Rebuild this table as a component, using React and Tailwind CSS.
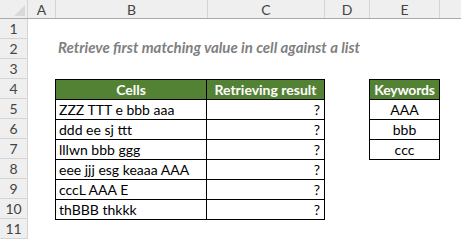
import React from 'react';

const rows = [
  ['ZZZ TTT e bbb aaa', 'AAA'],
  ['ddd ee sj ttt', 'bbb'],
  ['lllwn bbb ggg', 'ccc'],
  ['eee jjj esg keaaa AAA', null],
  ['cccL AAA E', null],
  ['thBBB thkkk', null],
];

const font = { fontFamily: 'Lato, "Open Sans", sans-serif' };

const App = () => {
  return (
    <div className="w-[461px] h-[240px] overflow-hidden bg-white text-[14px] text-black" style={font}>
      {/* column headers */}
      <div className="flex h-[19px] bg-[#efefef] border-b border-[#ababab] text-[14px] text-[#444]">
        <div className="w-[28px] border-r border-[#d4d4d4] flex items-end justify-end">
          <svg width="11" height="11" className="mr-[2px] mb-[2px]">
            <polygon points="11,0 11,11 0,11" fill="#d9d9d9" />
          </svg>
        </div>
        <div className="w-[28px] border-r border-[#d4d4d4] flex items-center justify-center">A</div>
        <div className="w-[152px] border-r border-[#d4d4d4] flex items-center justify-center">B</div>
        <div className="w-[117px] border-r border-[#d4d4d4] flex items-center justify-center">C</div>
        <div className="w-[45px] border-r border-[#d4d4d4] flex items-center justify-center">D</div>
        <div className="w-[70px] border-r border-[#d4d4d4] flex items-center justify-center">E</div>
        <div className="flex-1" />
      </div>

      <div className="flex">
        {/* row numbers */}
        <div className="w-[28px] bg-[#efefef] border-r border-[#d4d4d4] text-[14px] text-[#444]">
          {Array.from({ length: 11 }, (_, i) => (
            <div key={i} className="h-[20px] border-b border-[#d4d4d4] flex items-center justify-center">
              {i + 1}
            </div>
          ))}
        </div>

        <div className="flex-1">
          <div className="h-[20px]" />
          <div className="h-[20px] flex items-end pl-[30px] pb-[1px]">
            <span className="italic font-bold text-[15px] text-[#7f7f7f]">Retrieve first matching value in cell against a list</span>
          </div>
          <div className="h-[20px]" />

          <div className="flex">
            <div className="w-[27px]" />
            {/* main table */}
            <div className="w-[270px] border-l border-t border-black">
              <div className="flex h-[20px] bg-[#548235] text-white font-bold">
                <div className="w-[151px] border-r border-b border-black flex items-center justify-center">Cells</div>
                <div className="w-[118px] border-r border-b border-black flex items-center justify-center">Retrieving result</div>
              </div>
              {rows.map(([t], i) => (
                <div key={i} className="flex h-[20px]">
                  <div className="w-[151px] border-r border-b border-black flex items-center pl-[3px] whitespace-nowrap">{t}</div>
                  <div className="w-[118px] border-r border-b border-black flex items-center justify-end pr-[4px]">?</div>
                </div>
              ))}
            </div>
            <div className="w-[44px]" />
            {/* keywords table */}
            <div className="w-[71px] self-start border-l border-t border-black">
              <div className="h-[20px] bg-[#548235] text-white font-bold tracking-[-0.2px] border-r border-b border-black flex items-center justify-center">
                Keywords
              </div>
              {rows.filter(r => r[1]).map(([, k], i) => (
                <div key={i} className="h-[20px] border-r border-b border-black flex items-center justify-center">
                  {k}
                </div>
              ))}
            </div>
          </div>
        </div>
      </div>
    </div>
  );
};

export default App;
